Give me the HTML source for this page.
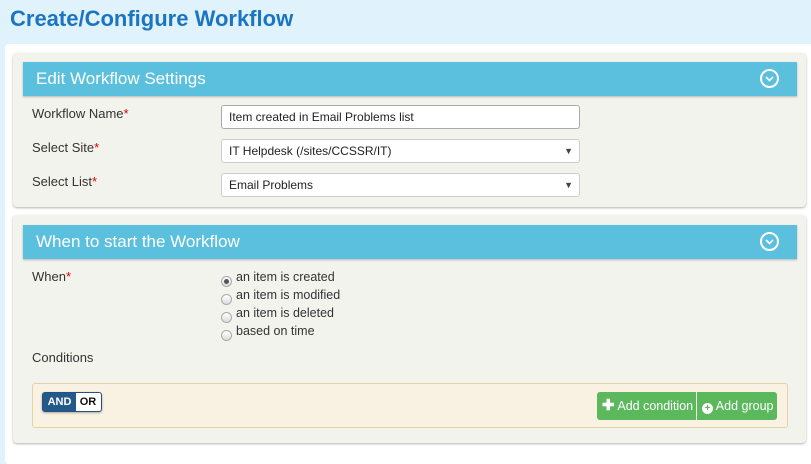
<!DOCTYPE html>
<html><head><style>
*{box-sizing:border-box;margin:0;padding:0}
body{width:811px;height:448px;overflow:hidden;background:#e0f3fd;font-family:"Liberation Sans",sans-serif;font-size:13px;color:#333;position:relative}
.abs{position:absolute}
h1{position:absolute;left:10px;top:6px;font-size:22px;font-weight:bold;color:#1b75c2}
.wrap{left:5px;top:44px;width:820px;height:420px;background:#fff;border-radius:4px}
.panel{background:#f3f3ee;border-radius:4px;box-shadow:0 1px 2px rgba(0,0,0,.3)}
.hdr{background:#5bc0de;color:#fff;font-size:17px;padding-left:13px;line-height:34px;box-shadow:0 1px 2px rgba(0,0,0,.25)}
.ic{position:absolute;right:18px;top:7px;width:19px;height:19px;border:2px solid #fff;border-radius:50%}
.lbl{font-size:13px;color:#333}
.req{color:#d00}
.inp{background:#fff;border:1px solid #aaa;border-radius:3px;height:24px;line-height:22px;padding-left:7px;font-size:12px;color:#222}
.sel{border-color:#ccc}
.arr{position:absolute;right:6px;top:0;font-size:9px;color:#444}
.rad{width:11px;height:11px;border:1px solid #aaa;border-radius:50%;background:linear-gradient(#fff,#ddd)}
.rt{font-size:12.5px;color:#333}
.btn{background:#5cb85c;color:#fff;font-size:12.5px;line-height:28px;height:28px;top:392px}
</style></head><body>
<h1>Create/Configure Workflow</h1>
<div class="abs wrap"></div>
<div class="abs panel" style="left:13px;top:53px;width:793px;height:154px"></div>
<div class="abs hdr" style="left:23px;top:62px;width:774px;height:34px">Edit Workflow Settings<span class="ic"><svg width="15" height="15" style="position:absolute;left:0;top:0"><path d="M4 6L7.5 9.5L11 6" stroke="#fff" stroke-width="1.6" fill="none"/></svg></span></div>
<div class="abs lbl" style="left:32px;top:106px">Workflow Name<span class="req">*</span></div>
<div class="abs lbl" style="left:32px;top:140px">Select Site<span class="req">*</span></div>
<div class="abs lbl" style="left:32px;top:174px">Select List<span class="req">*</span></div>
<div class="abs inp" style="left:221px;top:105px;width:359px">Item created in Email Problems list</div>
<div class="abs inp sel" style="left:221px;top:139px;width:359px">IT Helpdesk (/sites/CCSSR/IT)<span class="arr">▼</span></div>
<div class="abs inp sel" style="left:221px;top:173px;width:359px">Email Problems<span class="arr">▼</span></div>

<div class="abs panel" style="left:13px;top:215px;width:793px;height:228px"></div>
<div class="abs hdr" style="left:23px;top:225px;width:774px;height:34px">When to start the Workflow<span class="ic"><svg width="15" height="15" style="position:absolute;left:0;top:0"><path d="M4 6L7.5 9.5L11 6" stroke="#fff" stroke-width="1.6" fill="none"/></svg></span></div>
<div class="abs lbl" style="left:32px;top:269px">When<span class="req">*</span></div>
<div class="abs rad" style="left:221px;top:276px"><div style="width:5px;height:5px;background:#555;border-radius:50%;margin:2px"></div></div>
<div class="abs rad" style="left:221px;top:294px"></div>
<div class="abs rad" style="left:221px;top:312px"></div>
<div class="abs rad" style="left:221px;top:330px"></div>
<div class="abs rt" style="left:236px;top:270px">an item is created</div>
<div class="abs rt" style="left:236px;top:288px">an item is modified</div>
<div class="abs rt" style="left:236px;top:306px">an item is deleted</div>
<div class="abs rt" style="left:236px;top:324px">based on time</div>
<div class="abs lbl" style="left:32px;top:350px">Conditions</div>
<div class="abs" style="left:32px;top:383px;width:756px;height:45px;background:#f9f1e2;border:1px solid #e3d3a8;border-radius:3px"></div>
<div class="abs" style="left:42px;top:392px;width:60px;height:20px;border:1px solid #24527e;border-radius:3px;background:#fff;box-shadow:0 1px 2px rgba(0,0,0,.3);font-size:11px;font-weight:bold;line-height:18px">
<span style="display:inline-block;width:33px;background:#245a8a;color:#fff;text-align:center">AND</span><span style="display:inline-block;width:24px;text-align:center;color:#111">OR</span></div>
<div class="abs btn" style="left:597px;width:99px;border-radius:3px 0 0 3px;padding-left:5px"><b style="font-size:15px">✚</b> Add condition</div>
<div class="abs btn" style="left:697px;width:80px;border-radius:0 3px 3px 0;padding-left:5px"><span style="display:inline-block;width:11px;height:11px;border-radius:50%;background:#fff;color:#5cb85c;font-size:10px;line-height:11px;text-align:center;font-weight:bold;vertical-align:-1px">+</span> Add group</div>
</body></html>
